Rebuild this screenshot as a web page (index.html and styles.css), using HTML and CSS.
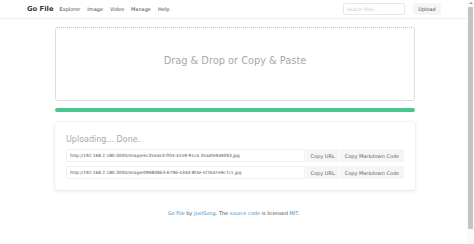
FILE: index.html
```html
<!DOCTYPE html>
<html>
<head>
<meta charset="utf-8">
<link rel="stylesheet" href="styles.css">
</head>
<body>
<nav class="navbar">
  <div class="brand">Go File</div>
  <div class="menu">
    <a>Explorer</a><a>Image</a><a>Video</a><a>Manage</a><a>Help</a>
  </div>
  <div class="end">
    <input class="search" placeholder="Search files...">
    <button class="upload">Upload</button>
  </div>
</nav>
<main class="container">
  <div class="drop">Drag &amp; Drop or Copy &amp; Paste</div>
  <div class="progress"></div>
  <div class="card">
    <div class="status">Uploading... Done.</div>
    <div class="row">
      <input class="url" value="http://192.168.2.180:3000/image/ec35ea53-ff04-4559-91ca-35adfe9a9093.jpg">
      <button class="btn">Copy URL</button>
      <button class="btn">Copy Markdown Code</button>
    </div>
    <div class="row">
      <input class="url" value="http://192.168.2.180:3000/image/099808b3-6796-434d-8f4e-5f7bd7e9c7c1.jpg">
      <button class="btn">Copy URL</button>
      <button class="btn">Copy Markdown Code</button>
    </div>
  </div>
</main>
<footer class="footer">
  <a>Go File</a> by <a>JustSong</a>. The <a>source code</a> is licensed <a>MIT</a>.
</footer>
<div class="scrollbar"><div class="arrow"></div><div class="thumb"></div></div>
</body>
</html>
```

FILE: styles.css
```css
* { box-sizing: border-box; }
html, body { margin: 0; padding: 0; background: #fff; }
body {
  font-family: "DejaVu Sans", Verdana, sans-serif;
  color: #4a4a4a;
  width: 474px;
  height: 244px;
  overflow: hidden;
  position: relative;
}
.navbar {
  width: 467px;
  height: 18px;
  display: flex;
  align-items: center;
  padding: 0 0 0 27px;
  box-shadow: 0 1px 1px rgba(0,0,0,0.06);
}
.brand {
  font-weight: bold;
  font-size: 6.8px;
  color: #363636;
  margin-right: 6px;
}
.menu { display: flex; gap: 7px; flex: 1; }
.menu a { font-size: 5px; color: #4a4a4a; }
.end { display: flex; align-items: center; gap: 8px; margin-right: 26px; }
.search {
  width: 62px; height: 12px;
  border: 1px solid #e8e8e8; border-radius: 2px;
  font: 4.5px "DejaVu Sans", sans-serif; padding: 0 3px;
  color: #999;
}
.search::placeholder { color: #c8c8c8; }
.upload {
  height: 12px; width: 28px;
  border: none; border-radius: 2px; background: #f5f5f5;
  font: 5px "DejaVu Sans", sans-serif; color: #4a4a4a; padding: 0;
}
.container { width: 360px; margin: 9px 0 0 55px; }
.drop {
  height: 74px;
  border: 1px dotted #c0c0c0;
  border-radius: 2px;
  display: flex; align-items: center; justify-content: center;
  padding-bottom: 8px;
  font-size: 9.8px; color: #a8a8a8;
}
.progress {
  height: 4px; margin-top: 7px;
  background: #48c78e; border-radius: 3px;
}
.card {
  margin-top: 10px;
  height: 68px;
  background: #fff;
  border-radius: 3px;
  box-shadow: 0 1px 4px rgba(10,10,10,0.1), 0 0 0 1px rgba(10,10,10,0.02);
  padding: 12px 10px 0 11px;
}
.status { font-size: 8px; color: #a8a8a8; height: 15px; line-height: 12px; }
.row { display: flex; height: 13px; margin-bottom: 4px; }
.url {
  width: 239px; height: 13px;
  border: 1px solid #f0f0f0; border-radius: 2px 0 0 2px;
  font: 4.3px "DejaVu Sans", sans-serif; color: #555; padding: 0 3px;
}
.btn {
  height: 13px; border: none; background: #f5f5f5;
  font: 5px "DejaVu Sans", sans-serif; color: #666; padding: 0 4.5px;
  margin-left: 1px;
}
.footer {
  width: 467px;
  text-align: center;
  font-size: 5px;
  color: #4a4a4a;
  margin-top: 20px;
}
.footer a { color: #3e8ed0; }
.scrollbar {
  position: absolute; top: 0; right: 0; width: 7px; height: 244px;
  background: #fafafa;
}
.arrow {
  width: 0; height: 0; margin: 2px auto 0;
  border-left: 2px solid transparent; border-right: 2px solid transparent;
  border-bottom: 2px solid #a0a0a0;
}
.thumb {
  width: 5px; margin: 3px auto 0; height: 222px;
  background: #c4c4c4; border-radius: 1px;
}
```
